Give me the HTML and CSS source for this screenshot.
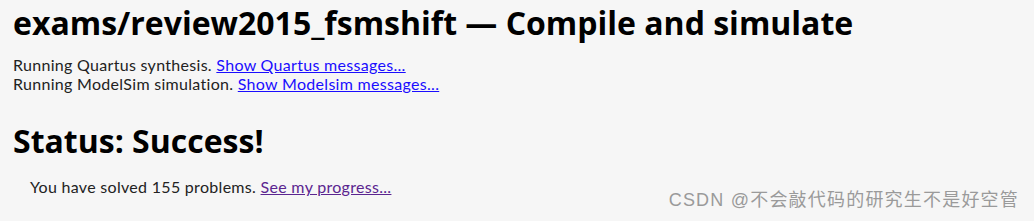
FILE: index.html
```html
<!DOCTYPE html>
<html lang="en">
<head>
    <meta charset="UTF-8">
    <title>Compile and simulate</title>
    <link rel="stylesheet" href="styles.css">
</head>
<body>
    <div class="page">
        <h1>exams/review2015_fsmshift — Compile and simulate</h1>
        <div class="log">
            <div>Running Quartus synthesis. <a href="#">Show Quartus messages...</a></div>
            <div>Running ModelSim simulation. <a href="#">Show Modelsim messages...</a></div>
        </div>
        <h2>Status: Success!</h2>
        <p class="solved">You have solved 155 problems. <a class="visited" href="#">See my progress...</a></p>
    </div>
    <div class="watermark">CSDN @不会敲代码的研究生不是好空管</div>
</body>
</html>
```

FILE: styles.css
```css
* {
    margin: 0;
    padding: 0;
    box-sizing: border-box;
}

body {
    background-color: #f6f6f6;
    font-family: Lato, "Liberation Sans", sans-serif;
    color: #222;
    height: 221px;
    overflow: hidden;
    position: relative;
}

.page {
    padding: 1px 13px;
}

h1, h2 {
    font-family: "Open Sans", sans-serif;
    font-weight: 700;
    font-size: 32px;
    color: #000;
    line-height: 44px;
}

.log {
    margin-top: 10px;
    font-size: 16px;
    line-height: 19px;
    letter-spacing: 0.3px;
}

a {
    color: #1a0dff;
}

a.visited {
    color: #5b2590;
}

h2 {
    margin-top: 26px;
}

.solved {
    margin-top: 14px;
    padding-left: 17px;
    font-size: 16px;
    line-height: 19px;
    letter-spacing: 0.3px;
}

.watermark {
    position: absolute;
    right: 15px;
    bottom: 10px;
    font-family: "Liberation Sans", "Noto Sans CJK SC", sans-serif;
    font-size: 18px;
    letter-spacing: 1.2px;
    color: #9a9a9a;
}
```
